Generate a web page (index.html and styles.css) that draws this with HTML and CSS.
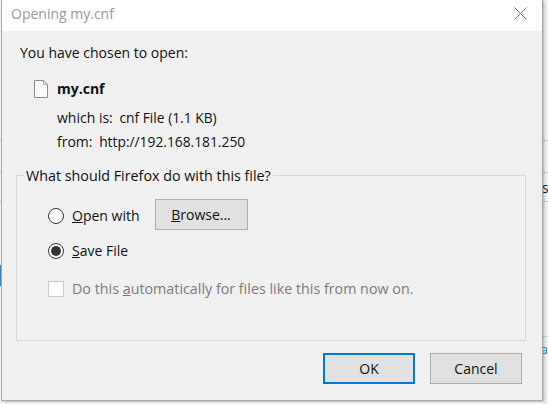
FILE: index.html
```html
<!DOCTYPE html>
<html lang="en">

<head>
    <meta charset="UTF-8" />
    <title>Opening my.cnf</title>
    <link rel="stylesheet" href="styles.css">
</head>

<body>
    <!-- bits of the page behind the dialog -->
    <div class="behind">
        <i class="line l1"></i>
        <i class="line l2"></i>
        <i class="line l3"></i>
        <i class="line l4"></i>
        <i class="line l5"></i>
        <i class="line l6"></i>
        <i class="dots"></i>
        <i class="tab"></i>
        <span class="peek peek-s">s</span>
        <span class="peek peek-link">a</span>
    </div>

    <div class="dialog">
        <div class="title-bar">
            <span class="title">Opening my.cnf</span>
            <svg class="close" width="13" height="13" viewBox="0 0 13 13">
                <path d="M0.5 0.5L12.5 12.5M12.5 0.5L0.5 12.5" />
            </svg>
        </div>
        <div class="content">
            <p class="intro">You have chosen to open:</p>
            <div class="file-row">
                <svg class="file-icon" width="14" height="18" viewBox="0 0 14 18">
                    <path class="page" d="M0.5 0.5H9.5L13.5 4.5V17.5H0.5Z" />
                    <path class="fold" d="M9.5 0.5V4.5H13.5" />
                </svg>
                <b>my.cnf</b>
            </div>
            <div class="info">which is: <span class="val">cnf File (1.1 KB)</span></div>
            <div class="info">from: <span class="val">http://192.168.181.250</span></div>

            <fieldset class="choice">
                <legend>What should Firefox do with this file?</legend>
                <div class="option">
                    <span class="radio"></span>
                    <span class="option-label"><u>O</u>pen with</span>
                    <button class="btn browse"><u>B</u>rowse...</button>
                </div>
                <div class="option">
                    <span class="radio checked"></span>
                    <span class="option-label"><u>S</u>ave File</span>
                </div>
                <div class="option auto">
                    <span class="checkbox"></span>
                    <span>Do this <u>a</u>utomatically for files like this from now on.</span>
                </div>
            </fieldset>

            <div class="actions">
                <button class="btn default">OK</button>
                <button class="btn">Cancel</button>
            </div>
        </div>
    </div>
</body>

</html>
```

FILE: styles.css
```css
html,
body {
    height: 100%;
}

body {
    margin: 0;
    padding: 0 5px 3px 1px;
    box-sizing: border-box;
    background: #fff;
    overflow: hidden;
    position: relative;
    font-family: "Open Sans", "Noto Sans", sans-serif;
    font-size: 14px;
    color: #111;
}

/* --- page behind --- */
.behind {
    position: absolute;
    inset: 0;
    background: linear-gradient(90deg, #fff 0 543px, #f1f1f1 543px);
}

.line {
    position: absolute;
    height: 1px;
    background: #d0d0d0;
}

.l1,
.l2,
.l3 {
    left: 543px;
    right: 0;
}

.l4,
.l5,
.l6 {
    left: 0;
    width: 1px;
}

.l1,
.l4 {
    top: 140px;
}

.l2,
.l5 {
    top: 172px;
}

.l3,
.l6 {
    top: 201px;
}

.dots {
    position: absolute;
    left: 543px;
    right: 0;
    top: 336px;
    border-top: 1px dotted #bbb;
}

.tab {
    position: absolute;
    left: 0;
    top: 265px;
    width: 1px;
    height: 21px;
    background: #3f86c6;
}

.peek {
    position: absolute;
    line-height: 16px;
}

.peek-s {
    left: 542px;
    top: 180px;
    color: #222;
}

.peek-link {
    left: 541px;
    top: 342px;
    font-size: 12px;
    color: #2a7fb8;
}

/* --- dialog --- */
.dialog {
    position: relative;
    height: 100%;
    border: 1px solid #a8a8a8;
    border-top: none;
    box-sizing: border-box;
    display: flex;
    flex-direction: column;
    background: #f0f0f0;
    box-shadow: 1px 1px 3px rgba(0, 0, 0, 0.3);
}

.title-bar {
    height: 31px;
    flex: none;
    background: #fff;
    display: flex;
    justify-content: space-between;
    align-items: center;
    padding: 0 15px 4px 9px;
    box-sizing: border-box;
}

.title {
    color: #999;
    font-size: 14px;
}

.close path {
    fill: none;
    stroke: #777;
    stroke-width: 1;
}

.content {
    flex: 1;
    display: flex;
    flex-direction: column;
    padding: 12px 16px 16px 14px;
}

.intro {
    margin: 0 0 0 4px;
    line-height: 19px;
}

.file-row {
    display: flex;
    align-items: center;
    gap: 9px;
    margin: 17px 0 8px 18px;
    height: 19px;
}

.file-row b {
    font-weight: 700;
}

.file-icon .page {
    fill: #fbfbfb;
    stroke: #8a8a8a;
}

.file-icon .fold {
    fill: none;
    stroke: #b0b0b0;
}

.info {
    margin-left: 41px;
    line-height: 24px;
}

.val {
    margin-left: 3px;
    font-size: 13.8px;
}

.choice {
    margin: 12px 0 0;
    padding: 13px 0 0;
    height: 175px;
    box-sizing: border-box;
    border: 1px solid #d8d8d8;
}

.choice legend {
    padding: 0 2px;
    margin-left: 7px;
    font-size: 14.3px;
}

.option {
    display: flex;
    align-items: center;
    height: 35px;
    margin-left: 31px;
}

.option-label {
    margin-left: 8px;
}

.radio {
    width: 14px;
    height: 14px;
    border: 1px solid #333;
    border-radius: 50%;
    background: #fff;
    display: flex;
    align-items: center;
    justify-content: center;
}

.radio.checked::after {
    content: "";
    width: 10px;
    height: 10px;
    border-radius: 50%;
    background: #333;
}

.option.auto {
    margin-top: 3px;
    color: #7b7b7b;
    gap: 8px;
    font-size: 14.3px;
}

.checkbox {
    width: 14px;
    height: 14px;
    border: 1px solid #ccc;
    background: #fff;
}

.btn {
    width: 92px;
    height: 31px;
    box-sizing: border-box;
    border: 1px solid #adadad;
    background: #e1e1e1;
    color: #111;
    padding: 0;
    font-family: inherit;
    font-size: 14px;
}

.browse {
    width: 93px;
    margin: -2px 0 0 15px;
}

.btn.default {
    border: 2px solid #0078d7;
}

.actions {
    display: flex;
    justify-content: flex-end;
    gap: 15px;
    margin-top: auto;
    padding-right: 4px;
}
```
